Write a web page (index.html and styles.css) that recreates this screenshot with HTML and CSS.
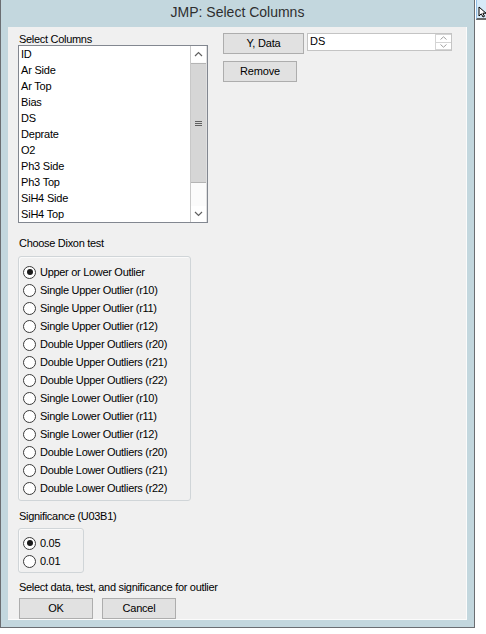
FILE: index.html
```html
<!DOCTYPE html>
<html>
<head>
  <meta charset="UTF-8">
  <title>JMP: Select Columns</title>
  <link rel="stylesheet" href="styles.css">
</head>
<body>

  <div class="window">
    <div class="titlebar">JMP: Select Columns</div>

    <div class="client">
      <div class="top-row">
        <div class="col-list">
          <div class="label">Select Columns</div>
          <div class="listbox">
            <ul class="items">
              <li>ID</li>
              <li>Ar Side</li>
              <li>Ar Top</li>
              <li>Bias</li>
              <li>DS</li>
              <li>Deprate</li>
              <li>O2</li>
              <li>Ph3 Side</li>
              <li>Ph3 Top</li>
              <li>SiH4 Side</li>
              <li>SiH4 Top</li>
            </ul>
            <div class="scrollbar">
              <div class="sb-btn">
                <svg width="9" height="6" viewBox="0 0 9 6"><path d="M1 5 L4.5 1.5 L8 5" fill="none" stroke="#606060" stroke-width="1.2"/></svg>
              </div>
              <div class="sb-thumb">
                <svg width="7" height="7" viewBox="0 0 7 7"><path d="M0 1.5 H7 M0 3.5 H7 M0 5.5 H7" stroke="#606060" stroke-width="1"/></svg>
              </div>
              <div class="sb-track"></div>
              <div class="sb-btn">
                <svg width="9" height="6" viewBox="0 0 9 6"><path d="M1 1 L4.5 4.5 L8 1" fill="none" stroke="#606060" stroke-width="1.2"/></svg>
              </div>
            </div>
          </div>
        </div>

        <div class="col-role">
          <div class="role-row">
            <button class="btn btn-role">Y, Data</button>
            <div class="field">
              <span class="field-text">DS</span>
              <div class="spin">
                <div class="spin-half">
                  <svg width="7" height="4" viewBox="0 0 7 4"><path d="M0.5 3.5 L3.5 0.8 L6.5 3.5" fill="none" stroke="#a0a0a0" stroke-width="1"/></svg>
                </div>
                <div class="spin-half">
                  <svg width="7" height="4" viewBox="0 0 7 4"><path d="M0.5 0.5 L3.5 3.2 L6.5 0.5" fill="none" stroke="#a0a0a0" stroke-width="1"/></svg>
                </div>
              </div>
            </div>
          </div>
          <button class="btn btn-remove">Remove</button>
        </div>
      </div>

      <div class="label label-dixon">Choose Dixon test</div>
      <div class="group group-tests">
        <div class="radio checked"><span class="dot"></span>Upper or Lower Outlier</div>
        <div class="radio"><span class="dot"></span>Single Upper Outlier (r10)</div>
        <div class="radio"><span class="dot"></span>Single Upper Outlier (r11)</div>
        <div class="radio"><span class="dot"></span>Single Upper Outlier (r12)</div>
        <div class="radio"><span class="dot"></span>Double Upper Outliers (r20)</div>
        <div class="radio"><span class="dot"></span>Double Upper Outliers (r21)</div>
        <div class="radio"><span class="dot"></span>Double Upper Outliers (r22)</div>
        <div class="radio"><span class="dot"></span>Single Lower Outlier (r10)</div>
        <div class="radio"><span class="dot"></span>Single Lower Outlier (r11)</div>
        <div class="radio"><span class="dot"></span>Single Lower Outlier (r12)</div>
        <div class="radio"><span class="dot"></span>Double Lower Outliers (r20)</div>
        <div class="radio"><span class="dot"></span>Double Lower Outliers (r21)</div>
        <div class="radio"><span class="dot"></span>Double Lower Outliers (r22)</div>
      </div>

      <div class="label label-sig">Significance (U03B1)</div>
      <div class="group group-sig">
        <div class="radio checked"><span class="dot"></span>0.05</div>
        <div class="radio"><span class="dot"></span>0.01</div>
      </div>

      <div class="label label-status">Select data, test, and significance for outlier</div>
      <div class="actions">
        <button class="btn btn-action">OK</button>
        <button class="btn btn-action">Cancel</button>
      </div>
    </div>
  </div>

  <!-- edge of the window behind, with the mouse pointer over it -->
  <div class="behind">
    <svg width="9" height="12" viewBox="0 0 9 12"><path d="M1 1 L1 10 L3.3 7.8 L5 11 L6.5 10.3 L4.9 7.2 L8 7.2 Z" fill="#fff" stroke="#000" stroke-width="1" stroke-linejoin="round"/></svg>
  </div>

</body>
</html>
```

FILE: styles.css
```css
body {
  margin: 0;
  padding: 0;
  background-color: #ffffff;
  font-family: "Liberation Sans", Arial, sans-serif;
  font-size: 11px;
  color: #000;
}

.window {
  box-sizing: border-box;
  width: 475px;
  height: 628px;
  padding: 0 7px 7px 7px;
  background-color: #c3d7de;
  border: 1px solid #6b6e72;
  border-top: none;
}

.titlebar {
  height: 27px;
  line-height: 24px;
  text-align: center;
  font-size: 14px;
  color: #2e2e2e;
}

.client {
  box-sizing: border-box;
  height: 593px;
  padding: 6px 0 0 10px;
  background-color: #f0f0f0;
  box-shadow: inset -1px -1px 0 #fbfbfb;
}

.label {
  height: 12px;
  line-height: 12px;
  margin-left: 1px;
  letter-spacing: -0.3px;
}

.top-row {
  display: flex;
}

.col-list {
  width: 190px;
}

.listbox {
  display: flex;
  height: 176px;
  border: 1px solid #828790;
  background: #ffffff;
}

.items {
  flex: 1;
  list-style: none;
  margin: 0;
  padding: 0 0 0 2px;
}

.items li {
  height: 16px;
  line-height: 16px;
  letter-spacing: -0.2px;
}

.scrollbar {
  width: 15px;
  display: flex;
  flex-direction: column;
  border-left: 1px solid #c8c8c8;
  border-right: 1px solid #e0e0e0;
  background: #fbfbfb;
}

.sb-btn {
  height: 16px;
  display: flex;
  align-items: center;
  justify-content: center;
  background: #ffffff;
}

.sb-thumb {
  height: 118px;
  margin: 1px 0;
  display: flex;
  align-items: center;
  justify-content: center;
  background: #d6d6d6;
  border: 1px solid #b4b4b4;
  border-left: none;
  border-right: none;
}

.sb-track {
  flex: 1;
}

.col-role {
  margin-left: 15px;
}

.role-row {
  display: flex;
  align-items: flex-start;
}

.btn {
  font-family: "Liberation Sans", Arial, sans-serif;
  font-size: 11px;
  color: #000;
  background: #e1e1e1;
  border: 1px solid #adadad;
  border-radius: 0;
  padding: 0;
  margin: 0;
  height: 21px;
  line-height: 19px;
  text-align: center;
  letter-spacing: -0.2px;
}

.btn-role {
  width: 81px;
}

.btn-remove {
  width: 74px;
  margin-top: 7px;
}

.field {
  width: 143px;
  height: 16px;
  margin-left: 3px;
  border: 1px solid #c4c4c4;
  background: #ffffff;
  display: flex;
  justify-content: space-between;
}

.field-text {
  padding-left: 2px;
  line-height: 15px;
}

.spin {
  width: 16px;
  display: flex;
  flex-direction: column;
}

.spin-half {
  flex: 1;
  display: flex;
  align-items: center;
  justify-content: center;
  border: 1px solid #d4d4d4;
  border-top: none;
  border-right: none;
}

.spin-half:first-child {
  border-top: 1px solid #d4d4d4;
}

.label-dixon {
  margin-top: 14px;
}

.group {
  margin-top: 7px;
  border: 1px solid #d0d5d8;
  border-radius: 3px;
  box-shadow: inset 1px 1px 0 #fafafa;
}

.group-tests {
  width: 171px;
  padding: 6px 0 3px 0;
}

.group-sig {
  width: 64px;
  margin-top: 6px;
  padding: 5px 0 2px 0;
}

.radio {
  height: 18px;
  display: flex;
  align-items: center;
  padding-left: 4px;
  letter-spacing: -0.3px;
}

.dot {
  width: 11px;
  height: 11px;
  margin-right: 4px;
  border: 1px solid #3a3a3a;
  border-radius: 50%;
  background: #ffffff;
  display: flex;
  align-items: center;
  justify-content: center;
}

.radio.checked .dot::after {
  content: "";
  width: 6px;
  height: 6px;
  border-radius: 50%;
  background: #1a1a1a;
}

.label-sig {
  margin-top: 9px;
}

.label-status {
  margin-top: 8px;
}

.actions {
  display: flex;
  gap: 9px;
  margin-top: 5px;
  margin-left: 1px;
}

.btn-action {
  width: 74px;
}

.behind {
  position: absolute;
  top: 0;
  left: 476px;
  width: 9px;
  height: 18px;
  padding-left: 1px;
  background: #d7eaf8;
  border-left: 1px solid #93bfe6;
  border-bottom: 2px solid #6a6a6a;
  box-sizing: content-box;
}

.behind svg {
  display: block;
  margin-top: 6px;
}
```
